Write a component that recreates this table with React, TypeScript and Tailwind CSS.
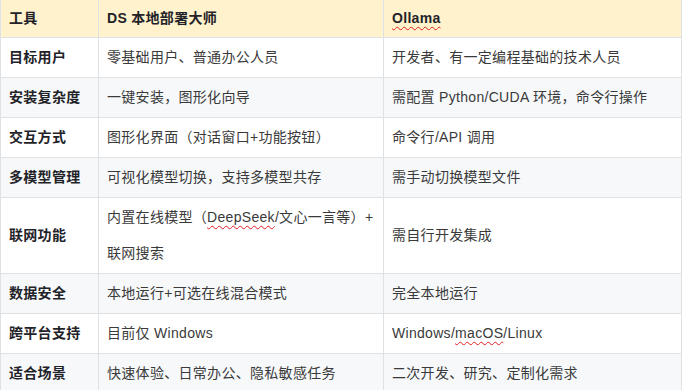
const rows: { name: string; ds: React.ReactNode; ol: React.ReactNode; tall?: boolean }[] = [
  { name: '目标用户', ds: '零基础用户、普通办公人员', ol: '开发者、有一定编程基础的技术人员' },
  { name: '安装复杂度', ds: '一键安装，图形化向导', ol: '需配置 Python/CUDA 环境，命令行操作' },
  { name: '交互方式', ds: '图形化界面（对话窗口+功能按钮）', ol: '命令行/API 调用' },
  { name: '多模型管理', ds: '可视化模型切换，支持多模型共存', ol: '需手动切换模型文件' },
  {
    name: '联网功能',
    ds: (
      <>
        内置在线模型（<Typo>DeepSeek</Typo>/文心一言等）+
        <br />
        联网搜索
      </>
    ),
    ol: '需自行开发集成',
    tall: true,
  },
  { name: '数据安全', ds: '本地运行+可选在线混合模式', ol: '完全本地运行' },
  { name: '跨平台支持', ds: '目前仅 Windows', ol: <>Windows/<Typo>macOS</Typo>/Linux</> },
  { name: '适合场景', ds: '快速体验、日常办公、隐私敏感任务', ol: '二次开发、研究、定制化需求' },
];

function Typo({ children }: { children: React.ReactNode }) {
  return <span className="underline decoration-wavy decoration-[#e02020] decoration-1 underline-offset-[3px]">{children}</span>;
}

export default function App() {
  return (
    <div className="h-[390px] w-[683px] overflow-hidden bg-white font-['Liberation_Sans','Noto_Sans_CJK_SC',sans-serif] text-[14px] tracking-[0.3px]">
      <table className="w-[681px] table-fixed border-collapse">
        <colgroup>
          <col className="w-[98px]" />
          <col className="w-[285px]" />
          <col className="w-[298px]" />
        </colgroup>
        <thead>
          <tr className="h-[37px] bg-[#fff2cc] text-[#1f2328]">
            <th className="border border-t-0 border-[#dfe2e5] px-2 text-left font-bold">工具</th>
            <th className="border border-t-0 border-[#dfe2e5] px-2 text-left font-bold">DS 本地部署大师</th>
            <th className="border border-t-0 border-[#dfe2e5] px-2 text-left font-bold">
              <Typo>Ollama</Typo>
            </th>
          </tr>
        </thead>
        <tbody>
          {rows.map((r, i) => (
            <tr key={r.name} className={`${r.tall ? 'h-[76px]' : 'h-[40px]'} ${i % 2 ? 'bg-[#f6f8fa]' : 'bg-white'}`}>
              <td className="border border-[#dfe2e5] px-2 font-bold text-[#1f2328]">{r.name}</td>
              <td className={`border border-[#dfe2e5] px-2 text-[#3a3a3a] ${r.tall ? 'leading-[36px]' : ''}`}>{r.ds}</td>
              <td className="border border-[#dfe2e5] px-2 text-[#3a3a3a]">{r.ol}</td>
            </tr>
          ))}
        </tbody>
      </table>
    </div>
  );
}
